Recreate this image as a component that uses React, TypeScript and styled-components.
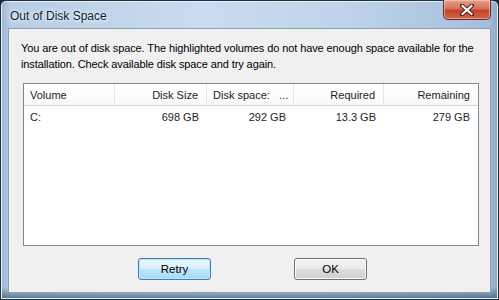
import React from 'react';
import styled, { createGlobalStyle } from 'styled-components';

const Global = createGlobalStyle`
    html, body {
        margin: 0;
        padding: 0;
        background: #1c2a38;
    }
    * {
        box-sizing: border-box;
    }
`;

const FONT = `'Liberation Sans', Arial, sans-serif`;

const Window = styled.div`
    width: 499px;
    height: 300px;
    border: 1px solid #23303d;
    border-radius: 6px 6px 0 0;
    background:
        linear-gradient(to bottom, rgba(0, 0, 0, 0) 96%, rgba(52, 86, 112, 0.75) 100%),
        linear-gradient(to right, #9fb8d2 0%, #b7cde4 2%, #c9dcef 40%, #bed3ea 70%, #a4bedb 98%, #8ea7c2 100%);
    box-shadow: inset 0 0 0 1px #e6eef7;
    display: flex;
    flex-direction: column;
    font-family: ${FONT};
    font-size: 11px;
    color: #000;
`;

const TitleBar = styled.div`
    height: 27px;
    flex: none;
    display: flex;
    align-items: flex-start;
    justify-content: space-between;
    padding: 0 7px 0 9px;
`;

const Title = styled.div`
    font-size: 12px;
    line-height: 12px;
    padding-top: 9px;
    color: #10202e;
    text-shadow: 0 0 6px #eaf2fb, 0 0 3px #fff;
`;

const Close = styled.div`
    width: 48px;
    height: 20px;
    margin-top: -1px;
    border: 1px solid #6b2b20;
    border-top: none;
    border-radius: 0 0 5px 5px;
    background: linear-gradient(to bottom, #e8a08c 0%, #d9705a 45%, #c4422a 55%, #d0664c 100%);
    box-shadow: inset 0 0 0 1px rgba(255, 220, 210, 0.5);
    display: flex;
    align-items: center;
    justify-content: center;
`;

const Client = styled.div`
    flex: 1;
    margin: 0 7px 6px 7px;
    border: 1px solid #8e9fb2;
    background: #f0f0f0;
    display: flex;
    flex-direction: column;
    padding: 11px 12px 0 12px;
`;

const Message = styled.p`
    margin: 0;
    line-height: 16px;
    letter-spacing: -0.1px;
    white-space: nowrap;
`;

const ListBox = styled.div`
    margin: 11px 0 0 2px;
    width: 456px;
    height: 163px;
    border: 1px solid #828790;
    background: #fff;
    display: flex;
    flex-direction: column;
`;

const Row = styled.div<{ $header?: boolean }>`
    display: grid;
    grid-template-columns: 91px 92px 87px 90px 1fr;
    height: ${p => (p.$header ? '22px' : '21px')};
    align-items: stretch;
    border-bottom: ${p => (p.$header ? '1px solid #d5d5d5' : 'none')};
    background: ${p => (p.$header ? 'linear-gradient(to bottom, #ffffff, #f7f8fa)' : 'transparent')};
`;

const Cell = styled.div<{ $right?: boolean; $header?: boolean }>`
    display: flex;
    align-items: center;
    justify-content: ${p => (p.$right ? 'flex-end' : 'flex-start')};
    padding: ${p => (p.$right ? '0 8px 0 0' : '0 0 0 6px')};
    border-right: ${p => (p.$header ? '1px solid #e3e5e8' : 'none')};
    color: #1e1e1e;
    white-space: pre;
    overflow: hidden;
    &:last-child {
        border-right: none;
    }
`;

const ButtonRow = styled.div`
    display: flex;
    gap: 83px;
    padding: 12px 0 0 117px;
`;

const Button = styled.button<{ $default?: boolean }>`
    width: 73px;
    height: 22px;
    padding: 0;
    font-family: ${FONT};
    font-size: 11.5px;
    color: #000;
    border: 1px solid ${p => (p.$default ? '#3c7fb1' : '#707070')};
    border-radius: 3px;
    background: ${p =>
        p.$default
            ? 'linear-gradient(to bottom, #eaf6fd 0%, #d9f0fc 49%, #bee6fd 50%, #a7d9f5 100%)'
            : 'linear-gradient(to bottom, #f2f2f2 0%, #ebebeb 49%, #dddddd 50%, #cfcfcf 100%)'};
    box-shadow: inset 0 0 0 1px ${p => (p.$default ? '#bde5f8' : '#fcfcfc')};
`;

const columns = [
    { label: 'Volume', right: false },
    { label: 'Disk Size', right: true },
    { label: 'Disk space:   ...', right: false },
    { label: 'Required', right: true },
    { label: 'Remaining', right: true },
];

const volumes = [{ name: 'C:', size: '698 GB', space: '292 GB', required: '13.3 GB', remaining: '279 GB' }];

const CloseIcon = () => (
    <svg width="14" height="12" viewBox="0 0 14 12">
        <path d="M2 1.5 L12 10.5 M12 1.5 L2 10.5" stroke="#4a1a12" strokeWidth="4" strokeLinecap="square" />
        <path d="M2.5 2 L11.5 10 M11.5 2 L2.5 10" stroke="#ffffff" strokeWidth="2.2" strokeLinecap="square" />
    </svg>
);

export default function App() {
    return (
        <>
            <Global />
            <Window>
                <TitleBar>
                    <Title>Out of Disk Space</Title>
                    <Close>
                        <CloseIcon />
                    </Close>
                </TitleBar>
                <Client>
                    <Message>
                        You are out of disk space. The highlighted volumes do not have enough space available for the
                        <br />
                        installation. Check available disk space and try again.
                    </Message>
                    <ListBox>
                        <Row $header>
                            {columns.map(c => (
                                <Cell key={c.label} $header $right={c.right}>
                                    {c.label}
                                </Cell>
                            ))}
                        </Row>
                        {volumes.map(v => (
                            <Row key={v.name}>
                                <Cell>{v.name}</Cell>
                                <Cell $right>{v.size}</Cell>
                                <Cell $right>{v.space}</Cell>
                                <Cell $right>{v.required}</Cell>
                                <Cell $right>{v.remaining}</Cell>
                            </Row>
                        ))}
                    </ListBox>
                    <ButtonRow>
                        <Button $default>Retry</Button>
                        <Button>OK</Button>
                    </ButtonRow>
                </Client>
            </Window>
        </>
    );
}
